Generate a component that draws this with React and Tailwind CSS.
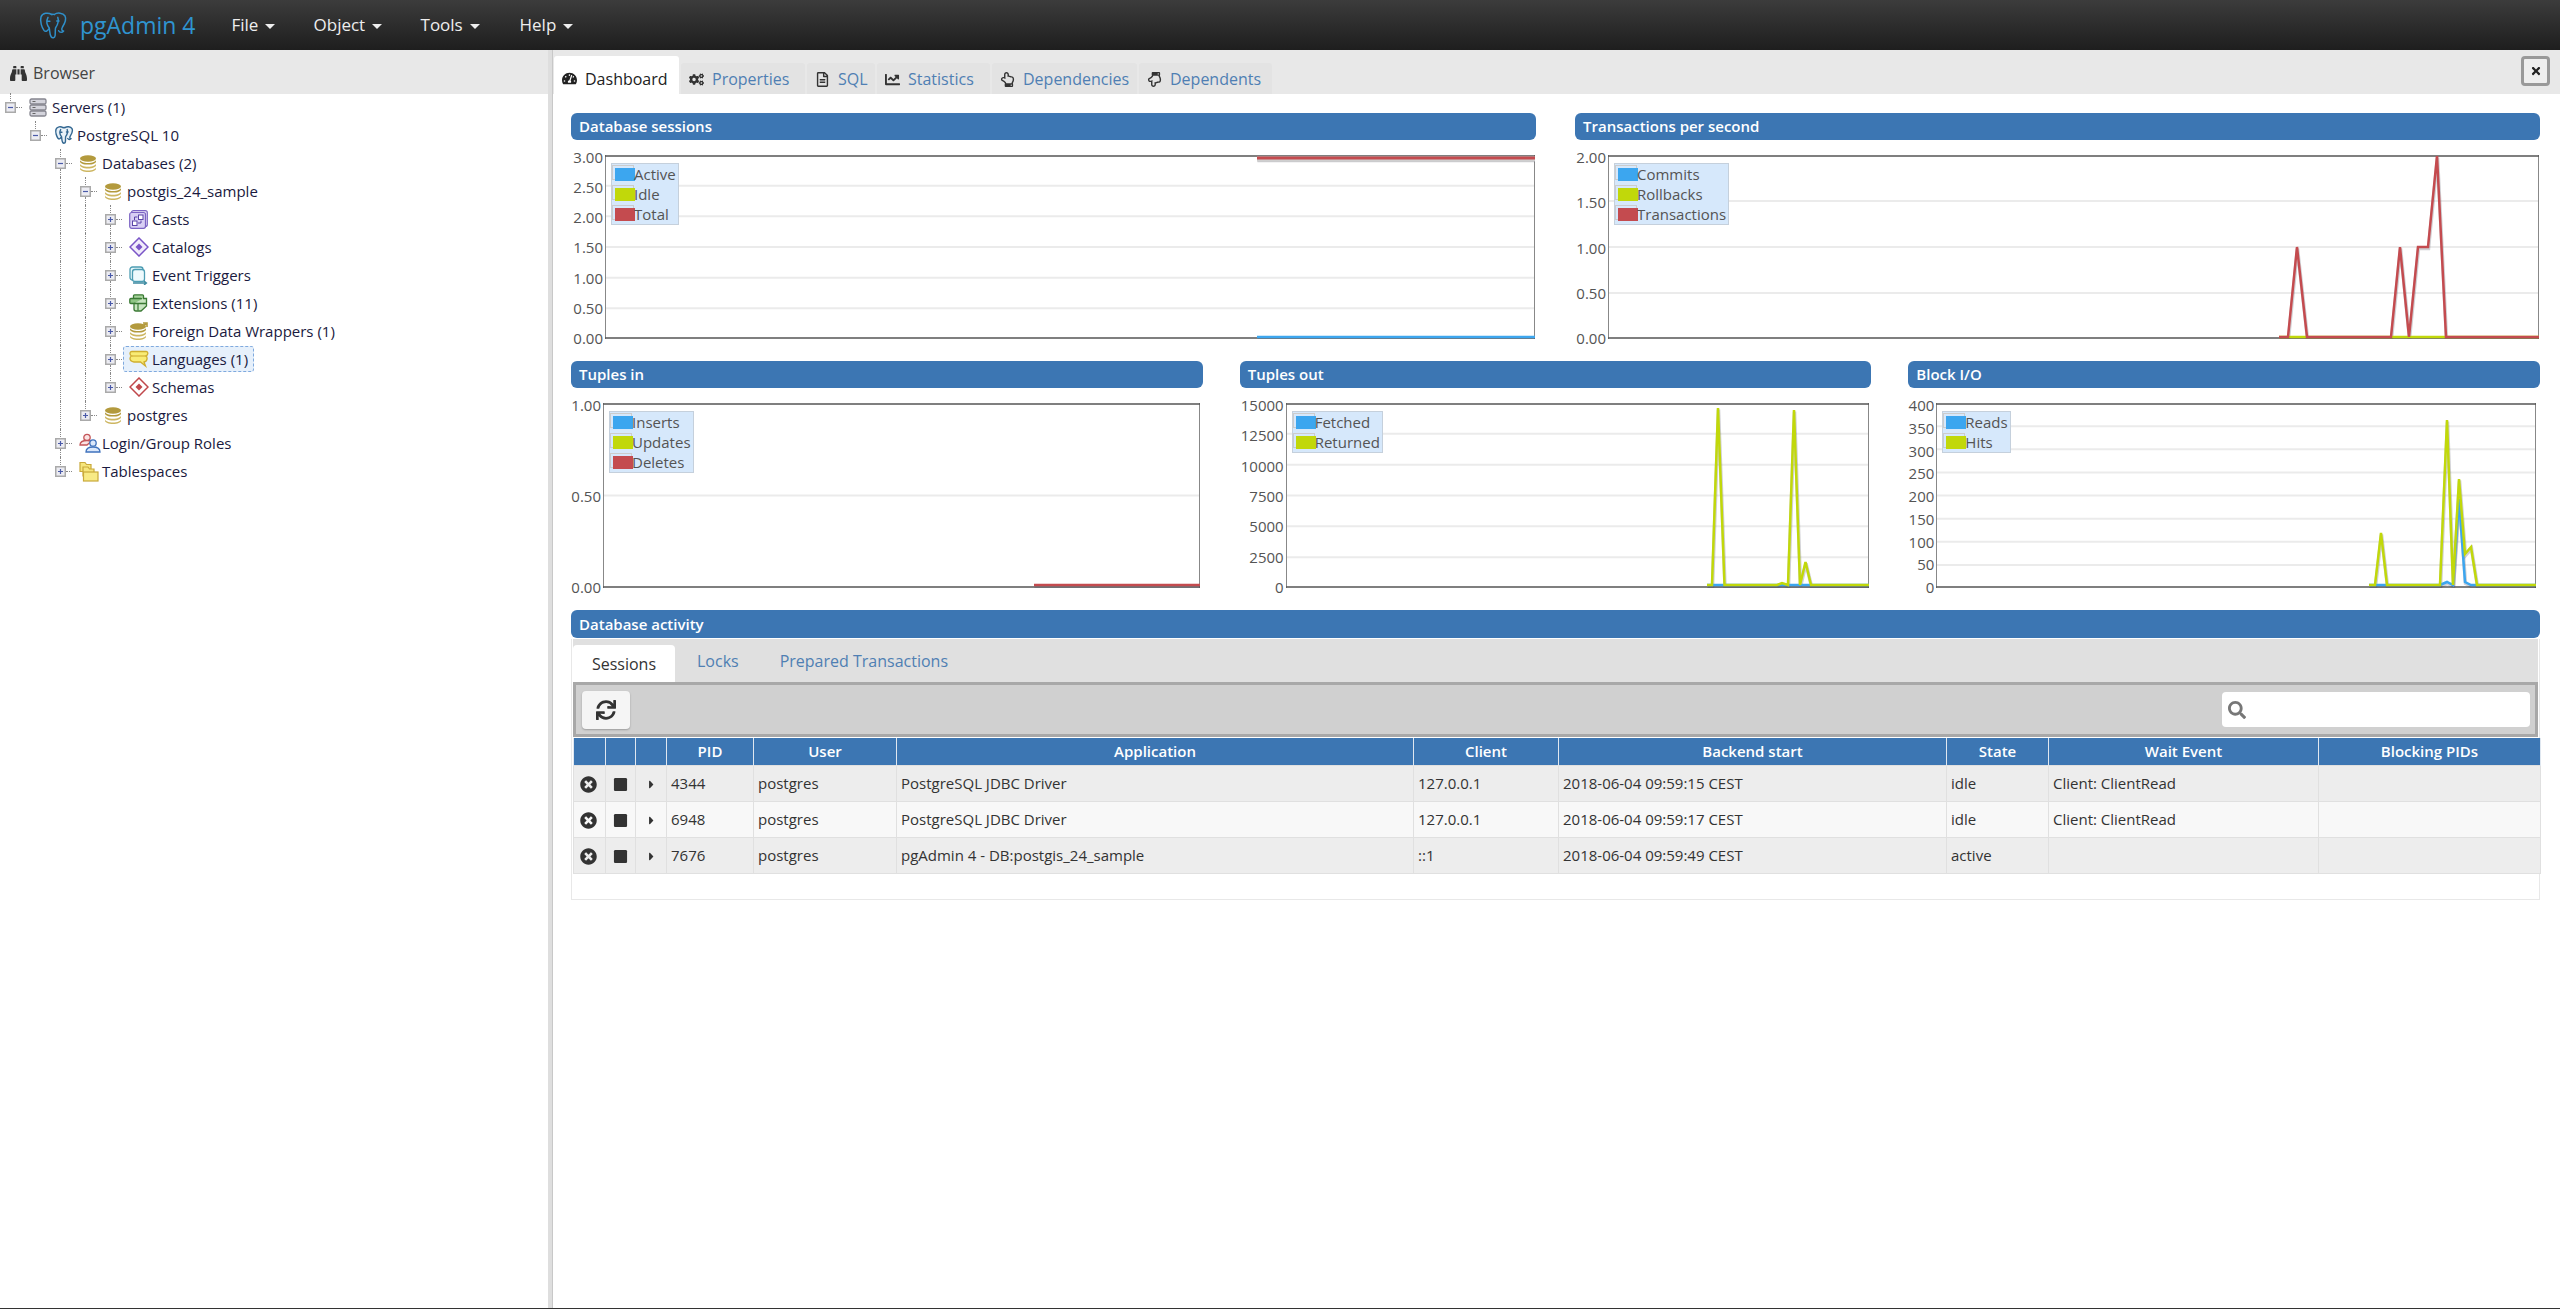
import React from 'react';
import {
  FaBinoculars, FaTachometerAlt, FaCogs, FaRegFileAlt, FaChartLine, FaRegHandPointUp,
  FaRegHandPointDown, FaTimes, FaSync, FaSearch, FaTimesCircle, FaSquare, FaCaretRight,
} from 'react-icons/fa';

const BLUE = '#3ca6ef';
const LIME = '#c1d80a';
const RED = '#c44b4f';

// --- tree icons ---
const Elephant = ({ className, stroke = '#336791', fill = 'none', width = 1.5 }) => (
  <svg viewBox="0 0 24 24" className={className} fill={fill} stroke={stroke} strokeWidth={width} strokeLinecap="round" strokeLinejoin="round">
    <path d="M11 3.2C8 1.4 3.6 1.8 2.4 5.2c-1.1 3.5.8 8.6 2.4 10.7 1.2 1.5 2.6.6 3.7-1" />
    <path d="M13 3.2c2.6-1.8 7-1.4 8.6 1.2 1.6 3-.6 6.6-2.1 9-1 1.8-.3 3.3 1 3-1 1.3-3 1.6-4-.2" />
    <path d="M8 5.5c-1.6 3-.8 6.2 1 8.5.5 2.5.2 5 1.5 7 1 1.5 3 1 3.2-1 .2-2 0-4 .3-6 1.7-2.5 3-5.4 1.8-8.5" />
    <path d="M11 3.2c.8-.4 1.4-.4 2 0" />
    <path d="M7.5 8.6h2M15 8.4h1.8" />
  </svg>
);

const ServerIcon = () => (
  <svg viewBox="0 0 18 19" className="w-[18px] h-[19px]">
    {[1, 7, 13].map((y) => (
      <g key={y}>
        <rect x="1" y={y} width="16" height="5" rx="1.5" fill="#d4d4dc" stroke="#85858f" strokeWidth="1.3" />
        <path d={`M3.5 ${y + 2.5}h3`} stroke="#666" strokeWidth="1" />
      </g>
    ))}
  </svg>
);

const DbIcon = ({ arrow }) => (
  <svg viewBox="0 0 19 19" className="w-[19px] h-[19px]">
    <ellipse cx="9" cy="4.5" rx="8" ry="3.2" fill="#b39a3d" />
    {[5.8, 9.6, 13.2].map((y) => (
      <path key={y} d={`M1 ${y}v1.6c0 1.8 3.6 3.2 8 3.2s8-1.4 8-3.2V${y}c0 1.8-3.6 3.2-8 3.2s-8-1.4-8-3.2z`} fill={y === 5.8 ? '#b39a3d' : '#cdb661'} />
    ))}
    {arrow && <path d="M11 5l6-3M14 1h4v4" fill="none" stroke="#b39a3d" strokeWidth="1.6" />}
  </svg>
);

const CastsIcon = () => (
  <svg viewBox="0 0 19 19" className="w-[19px] h-[19px]">
    <rect x="2.5" y="0.7" width="15.8" height="15.8" rx="2" fill="#ece7fa" stroke="#7c64c4" strokeWidth="1.2" />
    <rect x="0.7" y="2.5" width="15.8" height="15.8" rx="2" fill="#d8cff4" stroke="#7c64c4" strokeWidth="1.2" />
    <rect x="3.5" y="11" width="4.5" height="4.5" fill="#fff" stroke="#5b45a8" />
    <rect x="9.5" y="5" width="4.5" height="4.5" fill="#fff" stroke="#5b45a8" />
    <path d="M5.5 10V7h3M12 10.5V13H9" fill="none" stroke="#5b45a8" />
  </svg>
);

const DiamondIcon = ({ stroke, fill, inner }) => (
  <svg viewBox="0 0 20 20" className="w-[20px] h-[20px]">
    <polygon points="10,1 19,10 10,19 1,10" fill={fill} stroke={stroke} strokeWidth="1.5" />
    <polygon points="10,6.5 13.5,10 10,13.5 6.5,10" fill={inner} />
  </svg>
);

const TriggerIcon = () => (
  <svg viewBox="0 0 19 19" className="w-[19px] h-[19px]">
    <rect x="1" y="1" width="13" height="13" rx="2.5" fill="#e6f7fb" stroke="#4d9db3" strokeWidth="1.3" />
    <rect x="3.5" y="3.5" width="12" height="12" rx="2.5" fill="#eefafd" stroke="#4d9db3" strokeWidth="1.3" />
    <path d="M4 17h13M15 15l2.5 2-2.5 2" fill="none" stroke="#3f8ba1" strokeWidth="1.3" />
  </svg>
);

const ExtensionIcon = () => (
  <svg viewBox="0 0 19 19" className="w-[19px] h-[19px]">
    <rect x="4.5" y="0.8" width="10" height="5" rx="1" fill="#a7d29c" stroke="#3b7a35" strokeWidth="1.3" />
    <rect x="0.8" y="4.5" width="12" height="5" rx="1" fill="#8fc585" stroke="#3b7a35" strokeWidth="1.3" />
    <path d="M5 9.5h12.5v-5H14M5 9.5V15c0 1 1 2 2 2h5l5.5-5V9.5" fill="#c7e5c0" stroke="#3b7a35" strokeWidth="1.3" />
    <path d="M9 9.5v7" stroke="#3b7a35" strokeWidth="1.2" />
  </svg>
);

const LanguageIcon = () => (
  <svg viewBox="0 0 20 19" className="w-[20px] h-[19px]">
    <path d="M3 1.5h14c1.3 0 2 1 1.8 2.2-.2 1.4-1 2-1.8 2.3.8.6 1.2 1.4 1.1 2.6-.2 2.2-1.6 3.2-3.1 3.4l1.5 4-5-4H5C2.5 11.5 1 10.4 1 8.5c0-1.2.6-2 1.5-2.5C1.5 5.500 1 4.500 1 3.600 1 2.300 1.800 1.500 3 1.500z" fill="#f9ec75" stroke="#cfae2f" strokeWidth="1.3" />
    <path d="M3 6h14" stroke="#cfae2f" strokeWidth="1.1" />
  </svg>
);

const RolesIcon = () => (
  <svg viewBox="0 0 22 20" className="w-[22px] h-[20px]">
    <circle cx="8" cy="4.5" r="3.2" fill="#fbe3e3" stroke="#c4565a" strokeWidth="1.3" />
    <path d="M1 12c0-3 2.5-4.5 7-4.5 2 0 3 .3 4 1L8 12z" fill="#fbe3e3" stroke="#c4565a" strokeWidth="1.3" />
    <circle cx="14" cy="10" r="3.2" fill="#dbe8fb" stroke="#3f72bd" strokeWidth="1.3" />
    <path d="M7 19c0-3 2.5-5 7-5s7 2 7 5z" fill="#dbe8fb" stroke="#3f72bd" strokeWidth="1.3" />
  </svg>
);

const FoldersIcon = () => (
  <svg viewBox="0 0 20 21" className="w-[20px] h-[21px]">
    <path d="M1 1.5h5l1.5 2H12v7H1z" fill="#f6e67c" stroke="#c9a93a" strokeWidth="1.2" />
    <path d="M4 6h5l1.5 2H15v7H4z" fill="#f6e67c" stroke="#c9a93a" strokeWidth="1.2" />
    <rect x="4.5" y="11" width="14.5" height="9" fill="#f8ea85" stroke="#c9a93a" strokeWidth="1.2" />
  </svg>
);

// guides: depths with a dotted line running through the row
const tree = [
  { label: 'Servers (1)', depth: 0, open: true, icon: <ServerIcon />, guides: [] },
  { label: 'PostgreSQL 10', depth: 1, open: true, icon: <Elephant className="w-[20px] h-[22px]" fill="#e8f1f8" width={1.7} />, guides: [] },
  { label: 'Databases (2)', depth: 2, open: true, next: true, icon: <DbIcon />, guides: [] },
  { label: 'postgis_24_sample', depth: 3, open: true, next: true, icon: <DbIcon />, guides: [2] },
  { label: 'Casts', depth: 4, next: true, icon: <CastsIcon />, guides: [2, 3] },
  { label: 'Catalogs', depth: 4, next: true, icon: <DiamondIcon stroke="#7a55c7" fill="#f1ecfb" inner="#7a55c7" />, guides: [2, 3] },
  { label: 'Event Triggers', depth: 4, next: true, icon: <TriggerIcon />, guides: [2, 3] },
  { label: 'Extensions (11)', depth: 4, next: true, icon: <ExtensionIcon />, guides: [2, 3] },
  { label: 'Foreign Data Wrappers (1)', depth: 4, next: true, icon: <DbIcon arrow />, guides: [2, 3] },
  { label: 'Languages (1)', depth: 4, next: true, selected: true, icon: <LanguageIcon />, guides: [2, 3] },
  { label: 'Schemas', depth: 4, icon: <DiamondIcon stroke="#c0484c" fill="#fff" inner="#c0484c" />, guides: [2, 3] },
  { label: 'postgres', depth: 3, icon: <DbIcon />, guides: [2] },
  { label: 'Login/Group Roles', depth: 2, next: true, icon: <RolesIcon />, guides: [] },
  { label: 'Tablespaces', depth: 2, icon: <FoldersIcon />, guides: [] },
];

const Expander = ({ open, next }) => (
  <div className="relative w-[18px] h-[28px] shrink-0 flex items-center">
    <div className="absolute left-[5px] top-0 h-[8px] border-l border-dotted border-[#888]" />
    {next && <div className="absolute left-[5px] top-[20px] h-[8px] border-l border-dotted border-[#888]" />}
    <svg viewBox="0 0 11 11" className="w-[11px] h-[11px] shrink-0">
      <rect x="0.75" y="0.75" width="9.5" height="9.5" fill="#ececf2" stroke="#aaa" strokeWidth="1.5" />
      <path d={open ? 'M3 5.5h5' : 'M3 5.5h5M5.5 3v5'} stroke="#4a5aa8" strokeWidth="1.2" />
    </svg>
    <div className="w-[6px] border-t border-dotted border-[#888]" />
  </div>
);

const TreeRow = ({ row }) => (
  <div className="flex h-[28px] pl-[5px]">
    {Array.from({ length: row.depth }).map((_, i) => (
      <div key={i} className="w-[25px] shrink-0 pl-[5px]">
        {row.guides.includes(i) && <div className="h-full border-l border-dotted border-[#888]" />}
      </div>
    ))}
    <Expander open={row.open} next={row.next} />
    <div className={`flex items-center self-center h-[26px] pl-[5px] pr-[5px] rounded-[3px] border border-dashed ${row.selected ? 'bg-[#e6f0fb] border-[#7fa9de]' : 'border-transparent'}`}>
      <div className="w-[23px] shrink-0 flex items-center">{row.icon}</div>
      <span className="text-[15px] text-[#1a1a40] whitespace-nowrap">{row.label}</span>
    </div>
  </div>
);

// --- charts ---
const Chart = ({ title, labels, axisWidth, plotWidth, plotHeight = 184, legend, series }) => {
  const n = labels.length - 1;
  const lines = [];
  for (let i = 1; i < n; i++) lines.push((plotHeight * i) / n);

  return (
    <div>
      <div className="h-[27px] rounded-md bg-[#3c76b3] px-[8px] flex items-center text-[15px] font-semibold text-white">{title}</div>
      <div className="flex mt-[15px]">
        <div className="shrink-0 flex flex-col justify-between items-end pr-[2px] text-[15px] leading-[18px] text-[#545454] -mt-[7px] -mb-[8px]" style={{ width: axisWidth }}>
          {labels.map((l) => <span key={l}>{l}</span>)}
        </div>
        <div className="relative" style={{ width: plotWidth, height: plotHeight }}>
          <svg viewBox={`0 0 ${plotWidth} ${plotHeight}`} className="block w-full h-full">
            {lines.map((y) => <line key={y} x1="0" x2={plotWidth} y1={y} y2={y} stroke="#ebebeb" strokeWidth="2" />)}
            <line x1="0.5" x2="0.5" y1="0" y2={plotHeight} stroke="#888" />
            <line x1={plotWidth - 0.5} x2={plotWidth - 0.5} y1="0" y2={plotHeight} stroke="#888" />
            <line x1="0" x2={plotWidth} y1="1" y2="1" stroke="#555" strokeWidth="1.5" />
            <line x1="0" x2={plotWidth} y1={plotHeight - 1} y2={plotHeight - 1} stroke="#555" strokeWidth="1.5" />
            {series.map((s, i) => (
              <polyline key={`s${i}`} points={s.points} fill="none" stroke="#445" strokeOpacity="0.25" strokeWidth="3.5" transform="translate(0.5 1.5)" />
            ))}
            {series.map((s, i) => (
              <polyline key={i} points={s.points} fill="none" stroke={s.color} strokeWidth={s.width || 2.5} />
            ))}
          </svg>
          <div className="absolute left-[6px] top-[8px] bg-[#d6e8fb] border border-[#c5d0dc] text-[15px] leading-[20px] text-[#545454]">
            {legend.map((l) => (
              <div key={l.name} className="flex h-[20px]">
                <div className="w-[22px] h-[15px] mt-[1px] shrink-0 border border-[#ccc]">
                  <div className="w-[20px] h-[13px] ml-[2px] mt-[2px]" style={{ background: l.color }} />
                </div>
                <span className="pr-[2px] whitespace-nowrap">{l.name}</span>
              </div>
            ))}
          </div>
        </div>
      </div>
    </div>
  );
};

const flat = (a, b, y = 182) => `${a},${y} ${b},${y}`;

const txLine = '671,182 680,182 689,92 699,182 783,182 792,92 801,182 810,92 820,92 829,1 838,182 931,182';
const fetched = '421,182 426,182 432,5 438.5,182 491,182 496,180 502,182 508,7 514,182 519.5,159 525,182 583,182';
const hits = '433,182 439,182 445,130 451,182 504,182 511,17 517,182 523,76 529,151 535,144 541,182 600,182';
const reads = '433,182 451,182 504,182 511,179 517,182 523,96 529,179 535,182 600,182';

const tabs = [
  { label: 'Dashboard', Icon: FaTachometerAlt, active: true, w: 'w-[125px]' },
  { label: 'Properties', Icon: FaCogs, w: 'w-[124px]' },
  { label: 'SQL', Icon: FaRegFileAlt, w: 'w-[68px]' },
  { label: 'Statistics', Icon: FaChartLine, w: 'w-[113px]' },
  { label: 'Dependencies', Icon: FaRegHandPointUp, w: 'w-[145px]' },
  { label: 'Dependents', Icon: FaRegHandPointDown, w: 'w-[133px]' },
];

const sessions = [
  ['4344', 'postgres', 'PostgreSQL JDBC Driver', '127.0.0.1', '2018-06-04 09:59:15 CEST', 'idle', 'Client: ClientRead', ''],
  ['6948', 'postgres', 'PostgreSQL JDBC Driver', '127.0.0.1', '2018-06-04 09:59:17 CEST', 'idle', 'Client: ClientRead', ''],
  ['7676', 'postgres', 'pgAdmin 4 - DB:postgis_24_sample', '::1', '2018-06-04 09:59:49 CEST', 'active', '', ''],
];

const heads = [
  ['', 'w-[32px]'], ['', 'w-[30px]'], ['', 'w-[31px]'], ['PID', 'w-[87px]'], ['User', 'w-[143px]'],
  ['Application', 'w-[517px]'], ['Client', 'w-[145px]'], ['Backend start', 'w-[388px]'],
  ['State', 'w-[102px]'], ['Wait Event', 'w-[270px]'], ['Blocking PIDs', 'w-[222px]'],
];

export default function App() {
  return (
    <div className="h-screen flex flex-col overflow-hidden bg-white font-['Open_Sans',sans-serif]">
      {/* top nav */}
      <div className="h-[50px] shrink-0 flex items-center bg-gradient-to-b from-[#3c3c3c] to-[#1e1e1e]">
        <Elephant className="w-[30px] h-[31px] ml-[38px]" stroke="#2f8fc9" width={1.2} />
        <span className="ml-[12px] text-[23px] text-[#2f94d0]">pgAdmin 4</span>
        <div className="flex ml-[36px] text-[17px] text-[#eee]">
          {[['File', 'w-[82px]'], ['Object', 'w-[107px]'], ['Tools', 'w-[99px]'], ['Help', '']].map(([m, w]) => (
            <div key={m} className={`flex items-center ${w}`}>
              {m}
              <span className="ml-[7px] mt-[2px] border-x-[5px] border-x-transparent border-t-[5px] border-t-[#eee]" />
            </div>
          ))}
        </div>
      </div>

      <div className="flex-1 flex min-h-0">
        {/* browser tree */}
        <div className="w-[548px] shrink-0 flex flex-col">
          <div className="h-[44px] shrink-0 bg-[#e8e8e8] flex items-center pl-[10px] pt-[2px] text-[16px] text-[#444]">
            <FaBinoculars className="text-[17px] text-[#333] mr-[6px]" />
            Browser
          </div>
          <div className="-mt-[1px]">
            {tree.map((row) => <TreeRow key={row.label} row={row} />)}
          </div>
        </div>
        <div className="w-[5px] shrink-0 bg-[#dedede] border-r border-[#c8c8c8]" />

        {/* main panel */}
        <div className="flex-1 min-w-0 flex flex-col">
          <div className="h-[44px] shrink-0 bg-[#e8e8e8] flex justify-between">
            <div className="flex items-end gap-[2px] pl-[1px]">
              {tabs.map(({ label, Icon, active, w }) => (
                <div key={label} className={`flex items-center rounded-t-[3px] pl-[8px] text-[16px] ${w} ${active ? 'h-[38px] pt-[7px] bg-white text-[#222]' : 'h-[31px] pt-[1px] bg-[#e3e3e3] text-[#4f7fb3]'}`}>
                  <Icon className={`text-[15px] mr-[8px] shrink-0 ${active ? 'text-[#222]' : 'text-[#333]'}`} />
                  {label}
                </div>
              ))}
            </div>
            <div className="w-[29px] h-[30px] mt-[6px] mr-[10px] rounded-[4px] border-[3px] border-[#999] bg-[#eee] flex items-center justify-center">
              <FaTimes className="text-[12px] text-[#222]" />
            </div>
          </div>

          <div className="pl-[18px] pr-[20px] pt-[19px] flex flex-col gap-[22px]">
            <div className="grid grid-cols-2 gap-[39px]">
              <Chart
                title="Database sessions"
                labels={['3.00', '2.50', '2.00', '1.50', '1.00', '0.50', '0.00']}
                axisWidth={34}
                plotWidth={930}
                legend={[{ name: 'Active', color: BLUE }, { name: 'Idle', color: LIME }, { name: 'Total', color: RED }]}
                series={[{ points: flat(652, 930), color: BLUE }, { points: flat(652, 930, 4), color: '#cfcfcf', width: 5 }, { points: flat(652, 930, 3), color: RED, width: 3 }]}
              />
              <Chart
                title="Transactions per second"
                labels={['2.00', '1.50', '1.00', '0.50', '0.00']}
                axisWidth={33}
                plotWidth={931}
                legend={[{ name: 'Commits', color: BLUE }, { name: 'Rollbacks', color: LIME }, { name: 'Transactions', color: RED }]}
                series={[{ points: flat(671, 931), color: LIME }, { points: txLine, color: RED }]}
              />
            </div>

            <div className="grid grid-cols-3 gap-[37px]">
              <Chart
                title="Tuples in"
                labels={['1.00', '0.50', '0.00']}
                axisWidth={32}
                plotWidth={597}
                plotHeight={185}
                legend={[{ name: 'Inserts', color: BLUE }, { name: 'Updates', color: LIME }, { name: 'Deletes', color: RED }]}
                series={[{ points: flat(431, 597), color: RED }]}
              />
              <Chart
                title="Tuples out"
                labels={['15000', '12500', '10000', '7500', '5000', '2500', '0']}
                axisWidth={46}
                plotWidth={583}
                plotHeight={185}
                legend={[{ name: 'Fetched', color: BLUE }, { name: 'Returned', color: LIME }]}
                series={[{ points: flat(421, 583), color: BLUE }, { points: fetched, color: LIME }]}
              />
              <Chart
                title="Block I/O"
                labels={['400', '350', '300', '250', '200', '150', '100', '50', '0']}
                axisWidth={28}
                plotWidth={600}
                plotHeight={185}
                legend={[{ name: 'Reads', color: BLUE }, { name: 'Hits', color: LIME }]}
                series={[{ points: reads, color: BLUE }, { points: hits, color: LIME }]}
              />
            </div>

            {/* database activity */}
            <div>
              <div className="h-[28px] rounded-md bg-[#3c76b3] px-[8px] flex items-center text-[15px] font-semibold text-white">Database activity</div>
              <div className="mt-[1px] h-[261px] border-x border-b border-[#e8e8e8] px-[1px]">
                <div className="h-[43px] bg-[#e0e0e0] flex items-end text-[16px]">
                  <div className="w-[102px] h-[37px] rounded-t-[4px] bg-white flex items-center justify-center pt-[1px] text-[#333]">Sessions</div>
                  <div className="h-[43px] flex items-center pl-[22px] text-[#4f7fb3]">Locks</div>
                  <div className="h-[43px] flex items-center pl-[41px] text-[#4f7fb3]">Prepared Transactions</div>
                </div>
                <div className="h-[55px] bg-[#d0d0d0] border-[3px] border-[#a8a8a8] flex items-center justify-between pl-[6px] pr-[5px]">
                  <div className="w-[48px] h-[38px] rounded-[4px] bg-[#f5f5f5] shadow-[0_1px_2px_rgba(0,0,0,0.25)] flex items-center justify-center">
                    <FaSync className="text-[20px] text-[#333]" />
                  </div>
                  <div className="w-[308px] h-[35px] rounded-[4px] bg-white flex items-center pl-[6px]">
                    <FaSearch className="text-[18px] text-[#777]" />
                  </div>
                </div>
                <table className="mt-[1px] table-fixed border-collapse w-[1967px] text-[15px]">
                  <thead>
                    <tr className="h-[27px] bg-[#3c76b3] text-white">
                      {heads.map(([h, w], i) => (
                        <th key={i} className={`${w} p-0 font-semibold border-x border-[#dfe7f0]`}>{h}</th>
                      ))}
                    </tr>
                  </thead>
                  <tbody>
                    {sessions.map((row, r) => (
                      <tr key={r} className={`h-[36px] ${r === 1 ? 'bg-[#f8f8f8]' : 'bg-[#ededed]'}`}>
                        <td className="border border-[#e0e0e0] text-center pr-[2px]"><FaTimesCircle className="inline text-[17px] text-[#333]" /></td>
                        <td className="border border-[#e0e0e0] text-center"><FaSquare className="inline text-[15px] text-[#333]" /></td>
                        <td className="border border-[#e0e0e0] text-center"><FaCaretRight className="inline text-[13px] text-[#333]" /></td>
                        {row.map((c, i) => (
                          <td key={i} className="border border-[#e0e0e0] px-[4px] text-[#333] whitespace-nowrap">{c}</td>
                        ))}
                      </tr>
                    ))}
                  </tbody>
                </table>
              </div>
            </div>
          </div>
        </div>
      </div>
      <div className="h-[1px] shrink-0 bg-[#333]" />
    </div>
  );
}
